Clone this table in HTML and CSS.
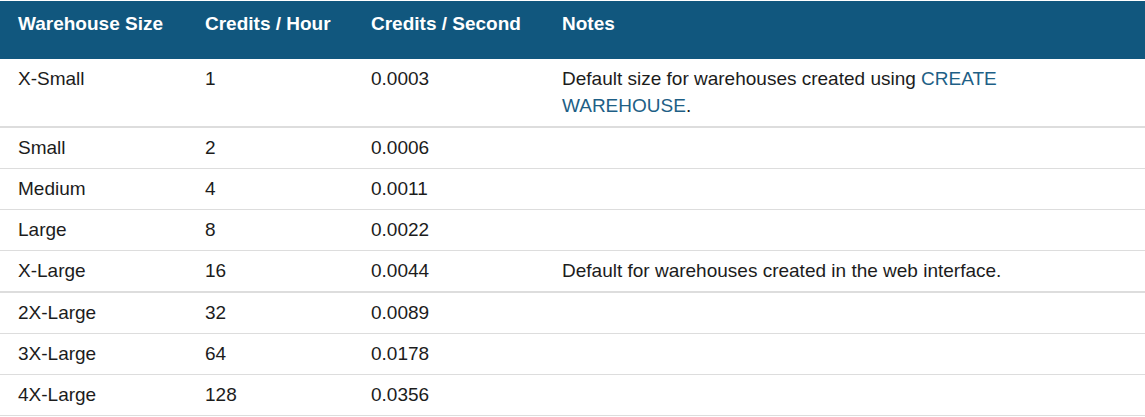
FILE: index.html
```html
<!DOCTYPE html>
<html>
<head>
<meta charset="utf-8">
<link rel="stylesheet" href="styles.css">
</head>
<body>
<table class="wh-table">
  <colgroup>
    <col class="c-size">
    <col class="c-hour">
    <col class="c-sec">
    <col class="c-notes">
  </colgroup>
  <thead>
    <tr>
      <th>Warehouse Size</th>
      <th>Credits / Hour</th>
      <th>Credits / Second</th>
      <th>Notes</th>
    </tr>
  </thead>
  <tbody>
    <tr class="thick">
      <td>X-Small</td>
      <td>1</td>
      <td>0.0003</td>
      <td>Default size for warehouses created using <a class="ref" href="#">CREATE WAREHOUSE</a>.</td>
    </tr>
    <tr>
      <td>Small</td>
      <td>2</td>
      <td>0.0006</td>
      <td></td>
    </tr>
    <tr>
      <td>Medium</td>
      <td>4</td>
      <td>0.0011</td>
      <td></td>
    </tr>
    <tr>
      <td>Large</td>
      <td>8</td>
      <td>0.0022</td>
      <td></td>
    </tr>
    <tr class="thick">
      <td>X-Large</td>
      <td>16</td>
      <td>0.0044</td>
      <td>Default for warehouses created in the web interface.</td>
    </tr>
    <tr>
      <td>2X-Large</td>
      <td>32</td>
      <td>0.0089</td>
      <td></td>
    </tr>
    <tr>
      <td>3X-Large</td>
      <td>64</td>
      <td>0.0178</td>
      <td></td>
    </tr>
    <tr>
      <td>4X-Large</td>
      <td>128</td>
      <td>0.0356</td>
      <td></td>
    </tr>
  </tbody>
</table>
</body>
</html>
```
FILE: styles.css
```css
html, body {
  margin: 0;
  padding: 0;
  background: #ffffff;
}

body {
  font-family: "Liberation Sans", Arial, sans-serif;
  font-size: 19px;
  color: #1c1c1c;
}

.wh-table {
  width: 1145px;
  margin-top: 1px;
  border-collapse: collapse;
  table-layout: fixed;
}

.c-size { width: 187px; }
.c-hour { width: 166px; }
.c-sec { width: 191px; }
.c-notes { width: 601px; }

.wh-table th {
  background: #11577e;
  color: #ffffff;
  font-weight: bold;
  text-align: left;
  vertical-align: top;
  line-height: 27px;
  height: 58px;
  box-sizing: border-box;
  padding: 9px 18px 22px;
}

.wh-table td {
  text-align: left;
  vertical-align: top;
  line-height: 27px;
  padding: 6px 18px 7px;
  border-bottom: 1px solid #dddddd;
}

.wh-table tr.thick td {
  border-bottom: 2px solid #dddddd;
}

.ref {
  color: #1e5f86;
  text-decoration: none;
}
```
